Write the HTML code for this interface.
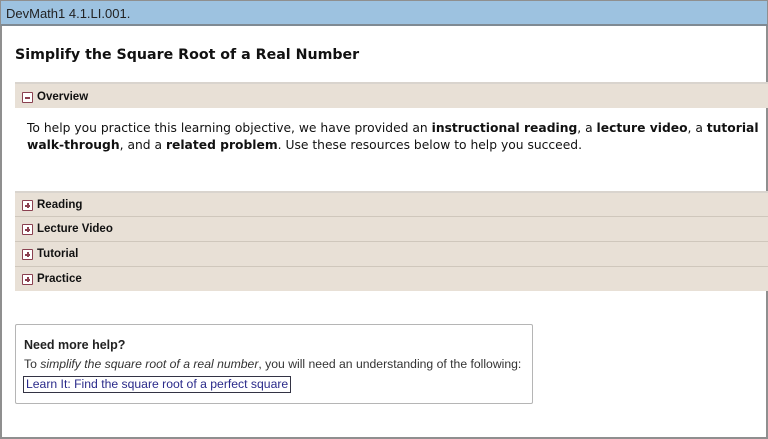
<!DOCTYPE html>
<html><head><meta charset="utf-8"><style>
*{margin:0;padding:0;box-sizing:border-box}
body{width:768px;height:439px;overflow:hidden;background:#fff;font-family:"DejaVu Sans","Liberation Sans",sans-serif;position:relative}
.frame{position:absolute;left:0;top:0;width:768px;height:439px;border:2px solid #8f8f8f;border-top:1px solid #8f8f8f}
.top{position:absolute;left:0;top:0;width:768px;height:26px;background:#9dc2e0;border:1px solid #8f8f8f;border-bottom:2px solid #7f8a93;font-family:"Liberation Sans",sans-serif;font-size:13px;color:#222;padding:5px 0 0 5px}
h1{position:absolute;left:15px;top:47px;font-size:14.2px;font-weight:bold;color:#111}
.bar{position:absolute;left:15px;width:753px;height:25px;background:#e8e0d6;font-family:"Liberation Sans",sans-serif;font-size:11.5px;font-weight:bold;color:#111;padding:6px 0 0 22px}
.bar.t{border-top:2px solid #d9d4ce}
.bar.b{border-top:1px solid #cfc7bc}
.ic{position:absolute;left:7px;top:7px;width:11px;height:11px;border:1px solid #8a4050;border-radius:1px;background:#fff}
.ic:before{content:"";position:absolute;left:2px;top:4px;width:5px;height:1.5px;background:#8a4050}
.ic.p:after{content:"";position:absolute;left:4px;top:2px;width:1.5px;height:5px;background:#8a4050}
.txt{position:absolute;left:27px;top:120px;width:738px;font-size:12.3px;line-height:17px;color:#111}
.help{position:absolute;left:15px;top:324px;width:518px;height:80px;border:1px solid #b5b5b5;border-radius:2px;font-family:"Liberation Sans",sans-serif;color:#333;padding:11px 0 0 8px}
.help b{font-size:12.5px;color:#222}
.help p{font-size:12.2px;margin-top:3px}
.lnk{display:inline-block;margin-top:5px;margin-left:-1px;border:1px solid #334;padding:0 2px;font-size:12.2px;color:#2a2a8a;line-height:15px}
</style></head><body>
<div class="frame"></div>
<div class="top">DevMath1 4.1.LI.001.</div>
<h1>Simplify the Square Root of a Real Number</h1>
<div class="bar t" style="top:82px;height:26px;padding-top:7px"><span class="ic" style="top:8px"></span>Overview</div>
<div class="txt">To help you practice this learning objective, we have provided an <b>instructional reading</b>, a <b>lecture video</b>, a <b>tutorial walk-through</b>, and a <b>related problem</b>. Use these resources below to help you succeed.</div>
<div class="bar t" style="top:191px"><span class="ic p"></span>Reading</div>
<div class="bar b" style="top:216px"><span class="ic p"></span>Lecture Video</div>
<div class="bar b" style="top:241px"><span class="ic p"></span>Tutorial</div>
<div class="bar b" style="top:266px"><span class="ic p"></span>Practice</div>
<div class="help"><b>Need more help?</b><p>To <i>simplify the square root of a real number</i>, you will need an understanding of the following:</p><span class="lnk">Learn It: Find the square root of a perfect square</span></div>
</body></html>
